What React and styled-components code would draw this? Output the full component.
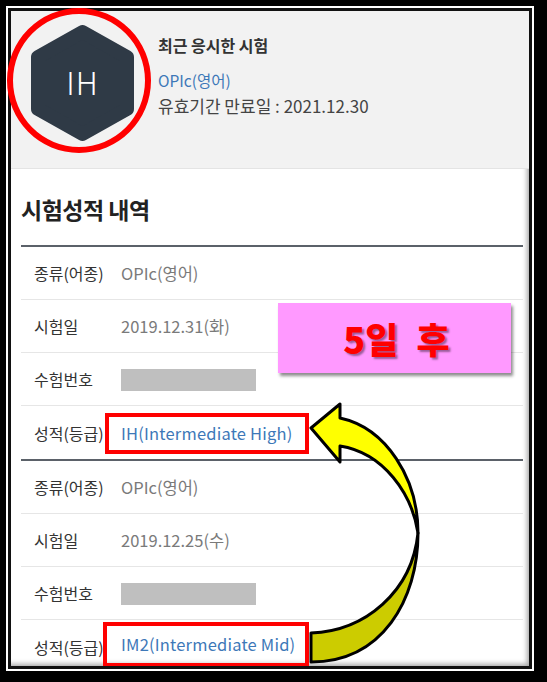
import React from "react";
import styled, { createGlobalStyle } from "styled-components";

const GlobalStyle = createGlobalStyle`
  html, body {
    margin: 0;
    padding: 0;
    background: #000;
  }
  body {
    font-family: "Noto Sans CJK KR", "Noto Sans", sans-serif;
    width: 547px;
    height: 682px;
    overflow: hidden;
  }
`;

// two exam records shown in the list, newest first
const records = [
  {
    kind: "OPIc(영어)",
    date: "2019.12.31(화)",
    grade: "IH(Intermediate High)",
  },
  {
    kind: "OPIc(영어)",
    date: "2019.12.25(수)",
    grade: "IM2(Intermediate Mid)",
    tall: true,
  },
];

const Hexagon = () => (
  <svg width="105" height="118" viewBox="0 0 105 118">
    <polygon
      points="52.5,8 97,33 97,85 52.5,110 8,85 8,33"
      fill="#2f3a46"
      stroke="#2f3a46"
      strokeWidth="14"
      strokeLinejoin="round"
    />
  </svg>
);

const CurvedArrow = () => (
  <svg width="130" height="275" viewBox="300 400 130 275">
    <path
      d="M418,533 C418,600 382,662 311,662 L311,633 C365,631 412,592 418,533 Z"
      fill="#cccc00"
      stroke="#000"
      strokeWidth="3"
      strokeLinejoin="round"
    />
    <path
      d="M311,428 L340,404 L340,418 C386,428 418,478 418,533 C412,494 384,453 340,446 L340,462 Z"
      fill="#ffff00"
      stroke="#000"
      strokeWidth="3"
      strokeLinejoin="round"
    />
  </svg>
);

const App = () => {
  return (
    <>
      <GlobalStyle />
      <Screen>
        <Frame>
          <Card>
            <Header>
              <Avatar>
                <Hexagon />
                <AvatarText>IH</AvatarText>
              </Avatar>
              <HeaderInfo>
                <HeaderTitle>최근 응시한 시험</HeaderTitle>
                <HeaderLink>OPIc(영어)</HeaderLink>
                <HeaderText>유효기간 만료일 : 2021.12.30</HeaderText>
              </HeaderInfo>
            </Header>
            <Section>
              <SectionTitle>시험성적 내역</SectionTitle>
              {records.map((record, i) => (
                <Group key={i}>
                  <Row>
                    <Label>종류(어종)</Label>
                    <Value>{record.kind}</Value>
                  </Row>
                  <Row>
                    <Label>시험일</Label>
                    <Value>{record.date}</Value>
                  </Row>
                  <Row>
                    <Label>수험번호</Label>
                    <Masked />
                  </Row>
                  <Row last>
                    <Label>성적(등급)</Label>
                    <Grade tall={record.tall}>{record.grade}</Grade>
                  </Row>
                </Group>
              ))}
            </Section>
          </Card>
        </Frame>

        <Ring />
        <Callout>5일 후</Callout>
        <ArrowHolder>
          <CurvedArrow />
        </ArrowHolder>
      </Screen>
    </>
  );
};

const Screen = styled.div`
  position: relative;
  width: 547px;
  height: 682px;
  background: #000;
  box-sizing: border-box;
  padding: 6px 13px 11px 6px;
`;

const Frame = styled.div`
  height: 100%;
  box-sizing: border-box;
  border: 2px solid #fff;
`;

const Card = styled.div`
  height: 100%;
  box-sizing: border-box;
  border: 3px solid #111;
  background: #fff;
  overflow: hidden;
  display: flex;
  flex-direction: column;
  box-shadow: inset -4px -4px 5px -2px rgba(0, 0, 0, 0.35);
`;

const Header = styled.div`
  display: flex;
  flex-direction: row;
  align-items: flex-start;
  background: #f2f2f2;
  border-bottom: 1px solid #e4e4e4;
  height: 158px;
  box-sizing: border-box;
  padding: 13px 0 0 19px;
  flex-shrink: 0;
`;

const Avatar = styled.div`
  position: relative;
  width: 105px;
  height: 118px;
  display: flex;
  align-items: center;
  justify-content: center;

  svg {
    position: absolute;
    left: 0;
    top: 0;
  }
`;

const AvatarText = styled.span`
  position: relative;
  color: #fff;
  font-family: "Noto Sans CJK KR", "Open Sans", sans-serif;
  font-weight: 300;
  font-size: 31px;
  letter-spacing: 1px;
  margin-top: -4px;
`;

const HeaderInfo = styled.div`
  display: flex;
  flex-direction: column;
  margin: 9px 0 0 23px;
`;

const HeaderTitle = styled.div`
  font-size: 16px;
  font-weight: 700;
  color: #333;
  line-height: 24px;
  margin-bottom: 10px;
`;

const HeaderLink = styled.div`
  font-size: 15.5px;
  color: #3d78b8;
  line-height: 26px;
`;

const HeaderText = styled.div`
  font-size: 17px;
  color: #444;
  line-height: 26px;
`;

const Section = styled.div`
  display: flex;
  flex-direction: column;
  padding: 0 6px 0 10px;
`;

const SectionTitle = styled.div`
  font-size: 23px;
  font-weight: 700;
  color: #222;
  line-height: 30px;
  letter-spacing: -0.5px;
  margin: 25px 0 21px 0;
`;

const Group = styled.div`
  display: flex;
  flex-direction: column;
  border-top: 2px solid #5b6169;
`;

const Row = styled.div`
  display: flex;
  flex-direction: row;
  align-items: center;
  height: 53px;
  box-sizing: border-box;
  padding-left: 13px;
  border-bottom: ${(props) => (props.last ? "none" : "1px solid #e6e6e6")};
`;

const Label = styled.div`
  width: 87px;
  flex-shrink: 0;
  font-size: 16px;
  color: #333;
`;

const Value = styled.div`
  font-size: 16.5px;
  color: #7a7a7a;
`;

const Masked = styled.div`
  width: 135px;
  height: 22px;
  background: #bfbfbf;
  margin-top: 2px;
`;

const Grade = styled.div`
  font-size: 16.5px;
  letter-spacing: 0.2px;
  color: #3d78b8;
  border: 4px solid #ff0000;
  margin-left: ${(props) => (props.tall ? "-18px" : "-16px")};
  padding: 0 ${(props) => (props.tall ? "10px" : "12px")} 0
    ${(props) => (props.tall ? "14px" : "12px")};
  height: ${(props) => (props.tall ? "37px" : "33px")};
  line-height: ${(props) => (props.tall ? "37px" : "33px")};
  margin-top: ${(props) => (props.tall ? "-5px" : "2px")};
  white-space: nowrap;
`;

const Ring = styled.div`
  position: absolute;
  left: 7px;
  top: 8px;
  width: 132px;
  height: 133px;
  border: 6px solid #ff0000;
  border-radius: 50%;
`;

const Callout = styled.div`
  position: absolute;
  left: 278px;
  top: 303px;
  width: 233px;
  height: 70px;
  background: #ff99ff;
  box-shadow: 2px 3px 3px rgba(0, 0, 0, 0.45);
  display: flex;
  align-items: center;
  justify-content: center;
  color: #ff0000;
  font-size: 36px;
  font-weight: 900;
  word-spacing: 10px;
  text-shadow: 2px 2px 2px rgba(0, 0, 0, 0.4);
  padding-left: 4px;
  box-sizing: border-box;
`;

const ArrowHolder = styled.div`
  position: absolute;
  left: 300px;
  top: 400px;
  width: 130px;
  height: 275px;
  line-height: 0;
`;

export default App;
